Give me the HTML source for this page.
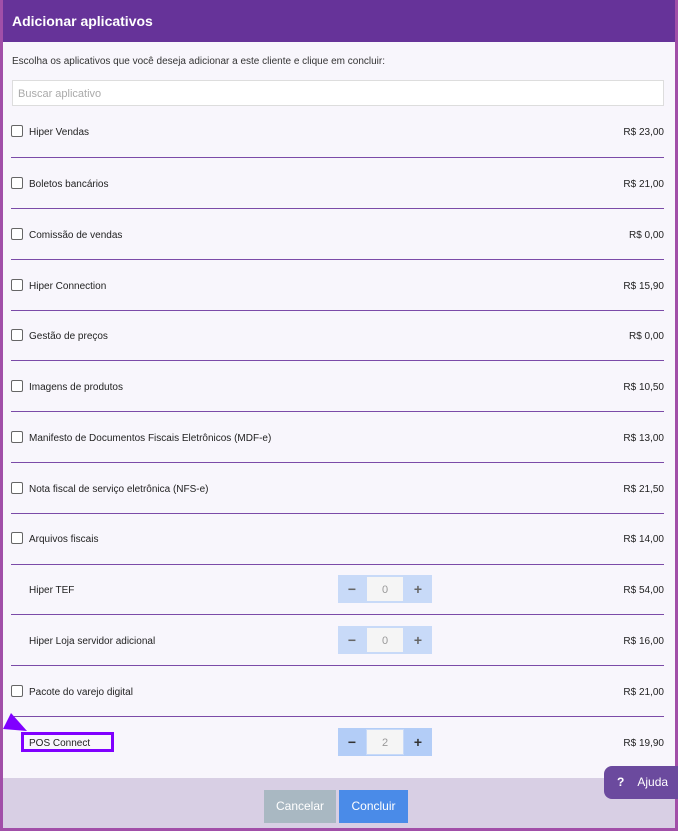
<!DOCTYPE html>
<html><head><meta charset="utf-8"><style>
*{box-sizing:border-box;margin:0;padding:0}
body{width:678px;height:831px;background:#a14fa8;font-family:"Liberation Sans",sans-serif;position:relative;overflow:hidden}
.main{position:absolute;left:3px;top:0;width:672px;height:828px;background:#f8f6fc}
.hdr{position:absolute;left:0;top:0;width:672px;height:42px;background:#663399;color:#fff;font-weight:bold;font-size:14px;line-height:42px;padding-left:9px}
.intro{position:absolute;left:9px;top:56px;font-size:10px;color:#333}
.search{position:absolute;left:9px;top:80px;width:652px;height:26px;background:#fff;border:1px solid #ddd;font-size:11px;color:#aaa;line-height:26px;padding-left:5px}
.row{position:absolute;left:8px;width:653px;height:20px;font-size:10px;color:#222;line-height:20px}
.row .cb{position:absolute;left:0;top:4px;width:12px;height:12px;border:1px solid #666;border-radius:2px;background:#fff}
.row .t{position:absolute;left:18px;top:2px}
.row .p{position:absolute;right:0;top:2px}
.sep{position:absolute;left:8px;width:653px;height:1px;background:#7b4ba8}
.stp{position:absolute;left:327px;top:-4px;width:94px;height:28px;background:#c8daf8;display:flex}
.stp .b{width:28px;text-align:center;font-weight:bold;font-size:14px;color:#666;line-height:28px}
.stp .v{width:38px;background:#f5f5f5;margin:1px 0;text-align:center;color:#999;font-size:11px;line-height:26px;border:1px solid #c8daf8}
.foot{position:absolute;left:0;top:778px;width:672px;height:50px;background:#d8cfe4}
.btn{position:absolute;top:12px;height:33px;color:#fff;font-size:12px;line-height:33px;text-align:center}
.ajuda{position:absolute;left:604px;top:766px;width:74px;height:33px;background:#6b4a9e;border-radius:8px 0 0 8px;color:#fff;font-size:12px;line-height:33px}
</style></head><body>
<div class="main">
<div class="hdr">Adicionar aplicativos</div>
<div class="intro">Escolha os aplicativos que você deseja adicionar a este cliente e clique em concluir:</div>
<div class="search">Buscar aplicativo</div>

<div class="row" style="top:121px"><span class="cb"></span><span class="t">Hiper Vendas</span><span class="p">R$ 23,00</span></div>
<div class="sep" style="top:157px"></div>
<div class="row" style="top:173px"><span class="cb"></span><span class="t">Boletos bancários</span><span class="p">R$ 21,00</span></div>
<div class="sep" style="top:208px"></div>
<div class="row" style="top:224px"><span class="cb"></span><span class="t">Comissão de vendas</span><span class="p">R$ 0,00</span></div>
<div class="sep" style="top:259px"></div>
<div class="row" style="top:275px"><span class="cb"></span><span class="t">Hiper Connection</span><span class="p">R$ 15,90</span></div>
<div class="sep" style="top:310px"></div>
<div class="row" style="top:325px"><span class="cb"></span><span class="t">Gestão de preços</span><span class="p">R$ 0,00</span></div>
<div class="sep" style="top:360px"></div>
<div class="row" style="top:376px"><span class="cb"></span><span class="t">Imagens de produtos</span><span class="p">R$ 10,50</span></div>
<div class="sep" style="top:411px"></div>
<div class="row" style="top:427px"><span class="cb"></span><span class="t">Manifesto de Documentos Fiscais Eletrônicos (MDF-e)</span><span class="p">R$ 13,00</span></div>
<div class="sep" style="top:462px"></div>
<div class="row" style="top:478px"><span class="cb"></span><span class="t">Nota fiscal de serviço eletrônica (NFS-e)</span><span class="p">R$ 21,50</span></div>
<div class="sep" style="top:513px"></div>
<div class="row" style="top:528px"><span class="cb"></span><span class="t">Arquivos fiscais</span><span class="p">R$ 14,00</span></div>
<div class="sep" style="top:564px"></div>
<div class="row" style="top:579px"><span class="t">Hiper TEF</span><div class="stp"><span class="b">−</span><span class="v">0</span><span class="b">+</span></div><span class="p">R$ 54,00</span></div>
<div class="sep" style="top:614px"></div>
<div class="row" style="top:630px"><span class="t">Hiper Loja servidor adicional</span><div class="stp"><span class="b">−</span><span class="v">0</span><span class="b">+</span></div><span class="p">R$ 16,00</span></div>
<div class="sep" style="top:665px"></div>
<div class="row" style="top:681px"><span class="cb"></span><span class="t">Pacote do varejo digital</span><span class="p">R$ 21,00</span></div>
<div class="sep" style="top:716px"></div>
<div class="row" style="top:732px"><span class="t">POS Connect</span><div class="stp" style="background:#b3cdf7"><span class="b" style="color:#333">−</span><span class="v">2</span><span class="b" style="color:#333">+</span></div><span class="p">R$ 19,90</span></div>

<div style="position:absolute;left:18px;top:732px;width:93px;height:20px;border:3px solid #8000ff"></div>
<svg style="position:absolute;left:0;top:713px" width="26" height="24"><polygon points="8,0 0,16 24,18" fill="#8000ff"/></svg>

<div class="foot">
<div class="btn" style="left:261px;width:72px;background:#a9b8c2">Cancelar</div>
<div class="btn" style="left:336px;width:69px;background:#4a8be8">Concluir</div>
</div>
</div>
<div class="ajuda"><b style="margin-left:13px">?</b><span style="margin-left:13px">Ajuda</span></div>
</body></html>
